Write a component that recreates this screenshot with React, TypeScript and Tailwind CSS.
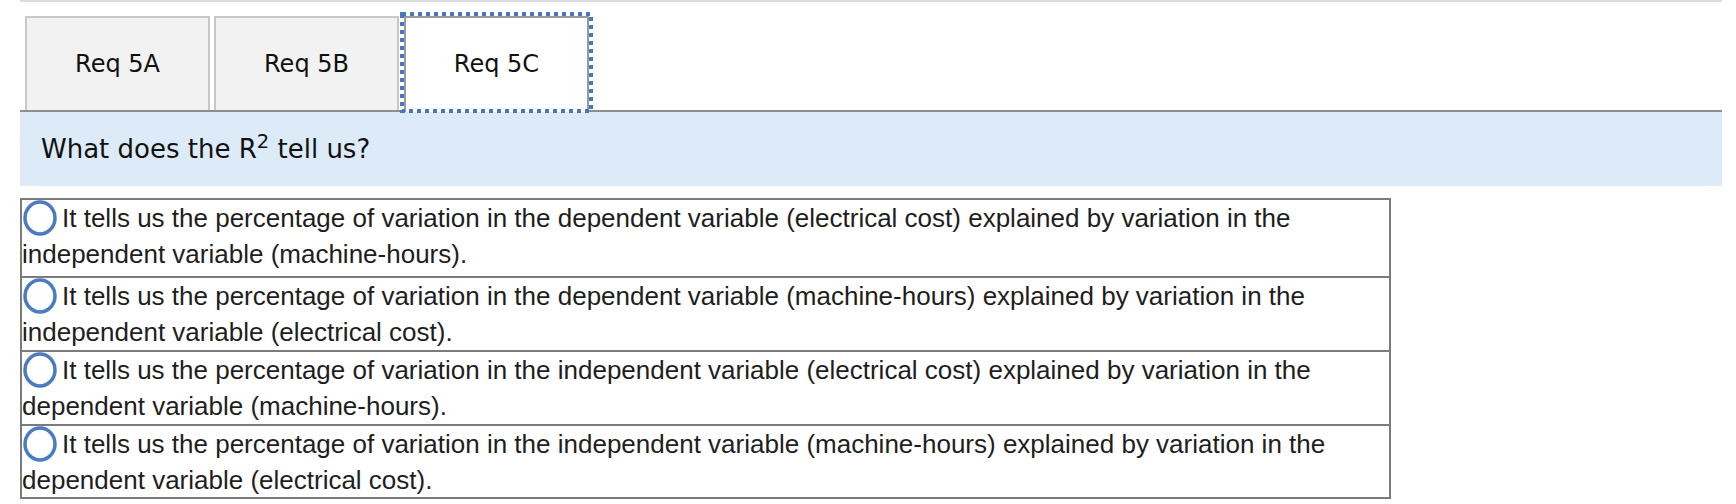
import React from 'react';

const OPTIONS = [
  'It tells us the percentage of variation in the dependent variable (electrical cost) explained by variation in the independent variable (machine-hours).',
  'It tells us the percentage of variation in the dependent variable (machine-hours) explained by variation in the independent variable (electrical cost).',
  'It tells us the percentage of variation in the independent variable (electrical cost) explained by variation in the dependent variable (machine-hours).',
  'It tells us the percentage of variation in the independent variable (machine-hours) explained by variation in the dependent variable (electrical cost).',
];

const ROW_CLASSES = [
  'h-[76px]',
  'h-[74px] border-t-2 border-[#7b7b7b]',
  'h-[74px] border-t-2 border-[#7b7b7b]',
  'h-[73px] border-t-2 border-[#7b7b7b]',
];

const Radio: React.FC = () => (
  <svg width="34" height="36" viewBox="0 0 34 36" className="inline-block align-top ml-[1px] mr-[5px]">
    <ellipse cx="17" cy="18" rx="15" ry="16" fill="white" stroke="#4a7cc0" strokeWidth="3.5" />
  </svg>
);

const App: React.FC = () => {
  return (
    <div className="w-[1736px] h-[504px] bg-white pl-[20px] pr-[14px] overflow-hidden">
      {/* top rule */}
      <div className="h-[2px] bg-[#dddddd]" />

      {/* Tabs */}
      <div className="mt-[14px] flex gap-[4px] pl-[5px] border-b-2 border-[#8e8e8e] h-[96px] font-['DejaVu_Sans',Verdana,sans-serif] text-[24px] text-[#111]">
        <div className="w-[185px] h-[94px] bg-[#f2f2f2] border-2 border-b-0 border-[#c8c8c8] flex items-center justify-center">
          Req 5A
        </div>
        <div className="w-[185px] h-[94px] bg-[#f2f2f2] border-2 border-b-0 border-[#c8c8c8] flex items-center justify-center">
          Req 5B
        </div>
        <div className="relative z-10 ml-[1px] w-[185px] h-[96px] bg-white border-2 border-b-0 border-[#9a9a9a] flex items-center justify-center pb-[2px]">
          Req 5C
          {/* focus ring */}
          <svg className="absolute -left-[6px] -top-[6px]" width="193" height="101" viewBox="0 0 193 101">
            <rect x="2" y="2" width="189" height="97" fill="none" stroke="#4a78c0" strokeWidth="4" strokeDasharray="4 4" />
          </svg>
        </div>
      </div>

      {/* Question */}
      <div className="h-[74px] bg-[#ddebf8] flex items-center pl-[21px] font-['DejaVu_Sans',Verdana,sans-serif] text-[26px] text-[#111] leading-[30px]">
        <span>
          What does the R<sup>2</sup> tell us?
        </span>
      </div>

      {/* Options */}
      <div className="mt-[12px] w-[1371px] border-2 border-[#7b7b7b] font-['Liberation_Sans',Arial,sans-serif] text-[26px] leading-[36px] text-[#1e1e1e]">
        {OPTIONS.map((text, i) => (
          <div key={i} className={ROW_CLASSES[i]}>
            <Radio />
            {text}
          </div>
        ))}
      </div>
    </div>
  );
};

export default App;
